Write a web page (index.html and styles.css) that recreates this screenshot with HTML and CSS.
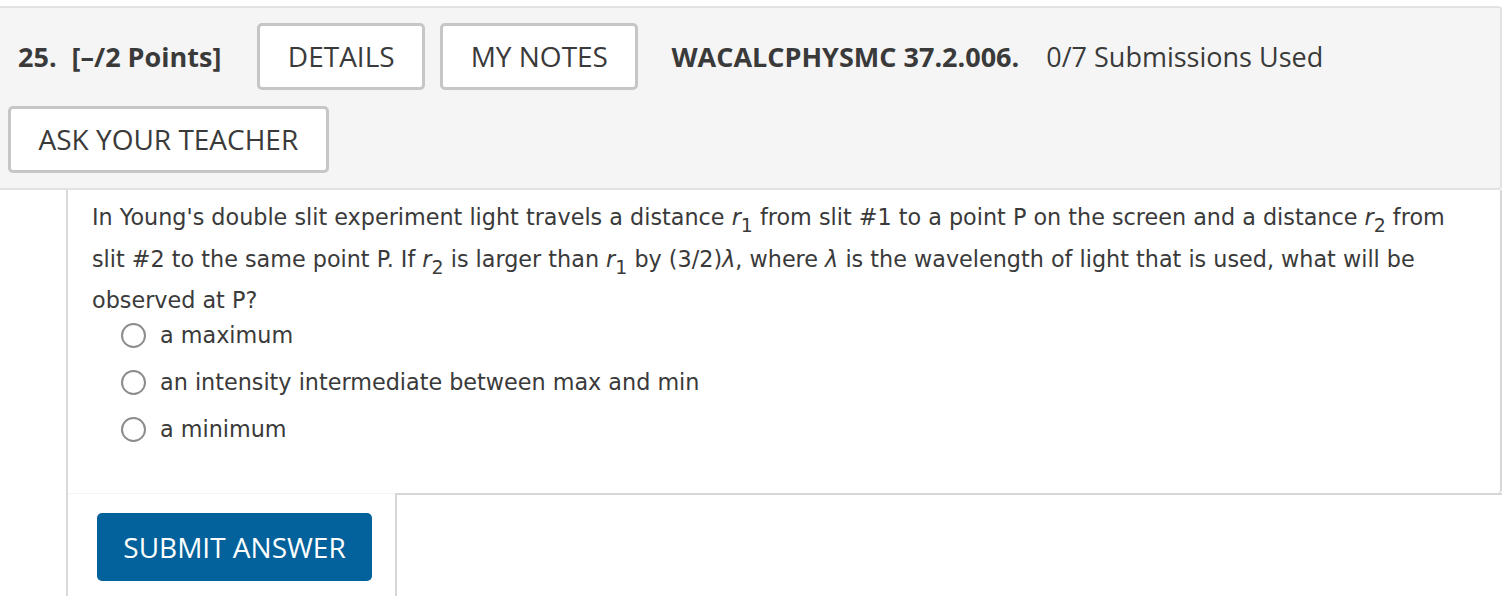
FILE: index.html
```html
<!DOCTYPE html>
<html lang="en">
<head>
<meta charset="utf-8">
<title>Question 25</title>
<link rel="stylesheet" href="styles.css">
</head>
<body>
<div class="header">
  <span class="qnum">25.</span>
  <span class="points">[–/2 Points]</span>
  <button class="btn">DETAILS</button>
  <button class="btn">MY NOTES</button>
  <span class="code">WACALCPHYSMC 37.2.006.</span>
  <span class="subs">0/7 Submissions Used</span>
  <button class="btn">ASK YOUR TEACHER</button>
</div>
<div class="body">
  <div class="question">
    <p class="text">In Young's double slit experiment light travels a distance <i>r</i><sub>1</sub> from slit #1 to a point P on the screen and a distance <i>r</i><sub>2</sub> from slit #2 to the same point P. If <i>r</i><sub>2</sub> is larger than <i>r</i><sub>1</sub> by (3/2)<i>λ</i>, where <i>λ</i> is the wavelength of light that is used, what will be observed at P?</p>
    <div class="options">
      <label class="option"><span class="radio"></span>a maximum</label>
      <label class="option"><span class="radio"></span>an intensity intermediate between max and min</label>
      <label class="option"><span class="radio"></span>a minimum</label>
    </div>
  </div>
  <div class="lower">
    <div class="submit-area"><button class="submit">SUBMIT ANSWER</button></div>
    <div class="side-box"></div>
  </div>
</div>
</body>
</html>
```

FILE: styles.css
```css
html, body {
  margin: 0;
  padding: 0;
  background: #ffffff;
}
body {
  font-family: "Open Sans", "Liberation Sans", sans-serif;
  color: #3a3a3a;
  width: 1509px;
  height: 596px;
  overflow: hidden;
}
.header {
  box-sizing: border-box;
  width: 1502px;
  margin-top: 6px;
  background: #f5f5f5;
  border: 2px solid #e2e2e2;
  border-left: none;
  border-radius: 0 4px 4px 0;
  padding: 15px 8px 15px 8px;
  display: flex;
  flex-wrap: wrap;
  align-items: center;
  column-gap: 15px;
  row-gap: 16px;
  font-size: 27px;
}
.qnum {
  font-weight: 700;
  margin-left: 10px;
}
.points {
  font-weight: 700;
  margin-right: 21px;
}
.code {
  font-weight: 700;
  margin-left: 18px;
}
.subs {
  margin-left: 12px;
}
.btn {
  box-sizing: border-box;
  height: 67px;
  padding: 0 27.5px;
  background: #ffffff;
  border: 3px solid #c6c6c6;
  border-radius: 5px;
  font-family: "Open Sans", "Liberation Sans", sans-serif;
  font-size: 28px;
  color: #3a3a3a;
  line-height: 61px;
}
.body {
  box-sizing: border-box;
  margin-left: 66px;
  width: 1436px;
  border-left: 2px solid #dadada;
  height: 420px;
  display: flex;
  flex-direction: column;
}
.question {
  box-sizing: border-box;
  height: 303px;
  border-right: 2px solid #d6d6d6;
  border-bottom-right-radius: 4px;
  padding: 7px 30px 0 24px;
  font-family: "DejaVu Sans", Verdana, sans-serif;
  font-size: 22.3px;
  color: #3a3a3a;
}
.text {
  margin: 0;
  line-height: 41.5px;
}
.text sub {
  font-size: 85%;
  vertical-align: -0.35em;
  line-height: 1;
}
.options {
  margin-top: -10px;
  padding-left: 29px;
  display: flex;
  flex-direction: column;
}
.option {
  display: flex;
  align-items: center;
  height: 47px;
  gap: 14px;
}
.radio {
  box-sizing: border-box;
  width: 25px;
  height: 25px;
  border: 2px solid #8c8c8c;
  border-radius: 50%;
  background: #fff;
}
.lower {
  flex: 1;
  display: flex;
}
.submit-area {
  box-sizing: border-box;
  width: 327px;
  border-top: 1px solid #f3f3f3;
  padding: 19px 0 0 29px;
}
.submit {
  box-sizing: border-box;
  width: 275px;
  height: 68px;
  background: #03629b;
  border: none;
  border-radius: 5px;
  color: #ffffff;
  font-family: "Open Sans", "Liberation Sans", sans-serif;
  font-size: 28px;
  padding: 0;
}
.side-box {
  flex: 1;
  border-top: 2px solid #d6d6d6;
  border-left: 2px solid #d6d6d6;
}
```
